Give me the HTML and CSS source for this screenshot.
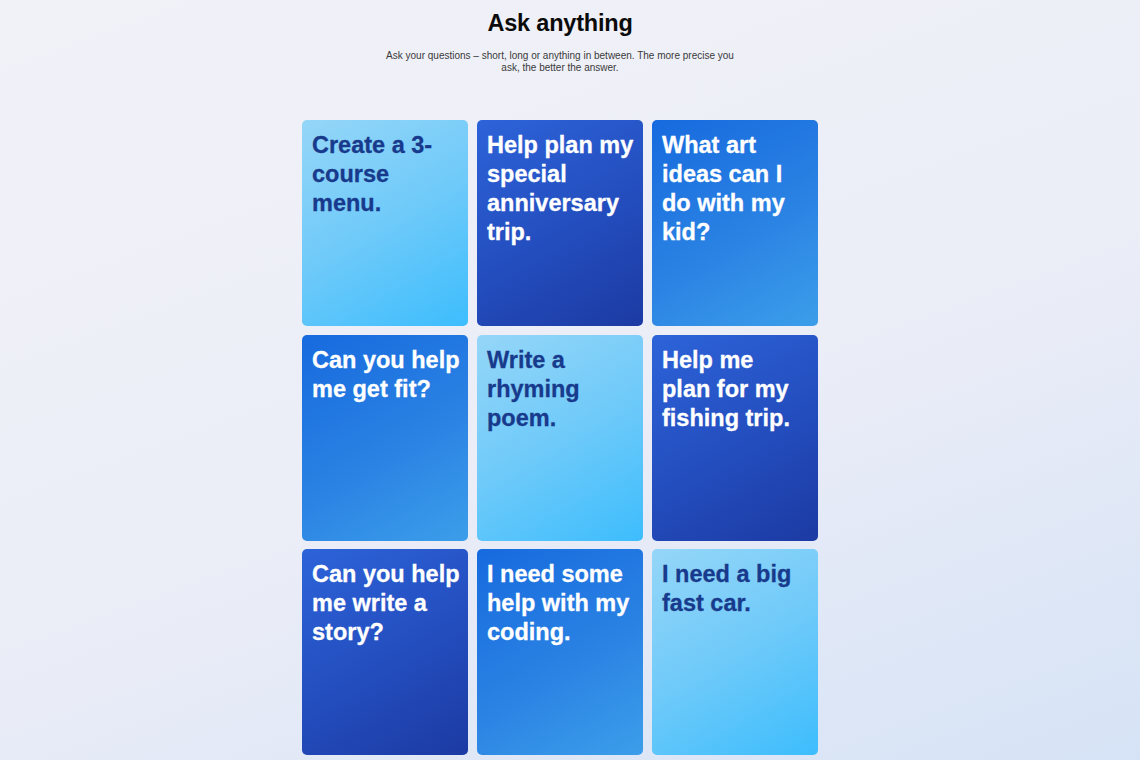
FILE: index.html
```html
<!DOCTYPE html>
<html lang="en">
<head>
<meta charset="utf-8">
<title>Ask anything</title>
<link rel="stylesheet" href="styles.css">
</head>
<body>
<main class="page">
  <h1 class="title">Ask anything</h1>
  <p class="subtitle">Ask your questions – short, long or anything in between. The more precise you ask, the better the answer.</p>
  <section class="grid">
    <div class="card light">Create a 3-<br>course<br>menu.</div>
    <div class="card dark">Help plan my<br>special<br>anniversary<br>trip.</div>
    <div class="card mid">What art<br>ideas can I<br>do with my<br>kid?</div>
    <div class="card mid">Can you help<br>me get fit?</div>
    <div class="card light">Write a<br>rhyming<br>poem.</div>
    <div class="card dark">Help me<br>plan for my<br>fishing trip.</div>
    <div class="card dark">Can you help<br>me write a<br>story?</div>
    <div class="card mid">I need some<br>help with my<br>coding.</div>
    <div class="card light">I need a big<br>fast car.</div>
  </section>
</main>
</body>
</html>
```
FILE: styles.css
```css
html, body {
  margin: 0;
  padding: 0;
  height: 100%;
}
body {
  font-family: "Liberation Sans", Arial, Helvetica, sans-serif;
  background: linear-gradient(160deg, #f1f2f8 0%, #ebedf7 55%, #d6e3f6 100%);
  overflow: hidden;
}
.page {
  width: 1120px;
  display: flex;
  flex-direction: column;
  align-items: center;
  padding-top: 8px;
}
.title {
  margin: 0;
  font-size: 23.5px;
  line-height: 30px;
  font-weight: 700;
  color: #0b0b0b;
  letter-spacing: -0.2px;
}
.subtitle {
  margin: 12px 0 0;
  max-width: 348px;
  font-size: 10px;
  line-height: 12px;
  color: #3a3a3a;
  text-align: center;
}
.grid {
  margin-top: 46px;
  display: grid;
  grid-template-columns: repeat(3, 166px);
  grid-auto-rows: 206px;
  gap: 8.5px 9px;
}
.card {
  border-radius: 5px;
  padding: 11px 4px 0 10px;
  font-size: 23.5px;
  line-height: 29px;
  font-weight: 700;
  white-space: nowrap;
  -webkit-text-stroke: 0.3px currentColor;
}
.light {
  color: #183a8c;
  background: linear-gradient(150deg, #95d6f8 0%, #6fcaf9 50%, #3dbdfd 100%);
}
.dark {
  color: #fff;
  background: linear-gradient(150deg, #2d63d9 0%, #244fc0 50%, #1c3aa3 100%);
}
.mid {
  color: #fff;
  background: linear-gradient(150deg, #176ade 0%, #2a82e3 55%, #3c9eea 100%);
}
```
